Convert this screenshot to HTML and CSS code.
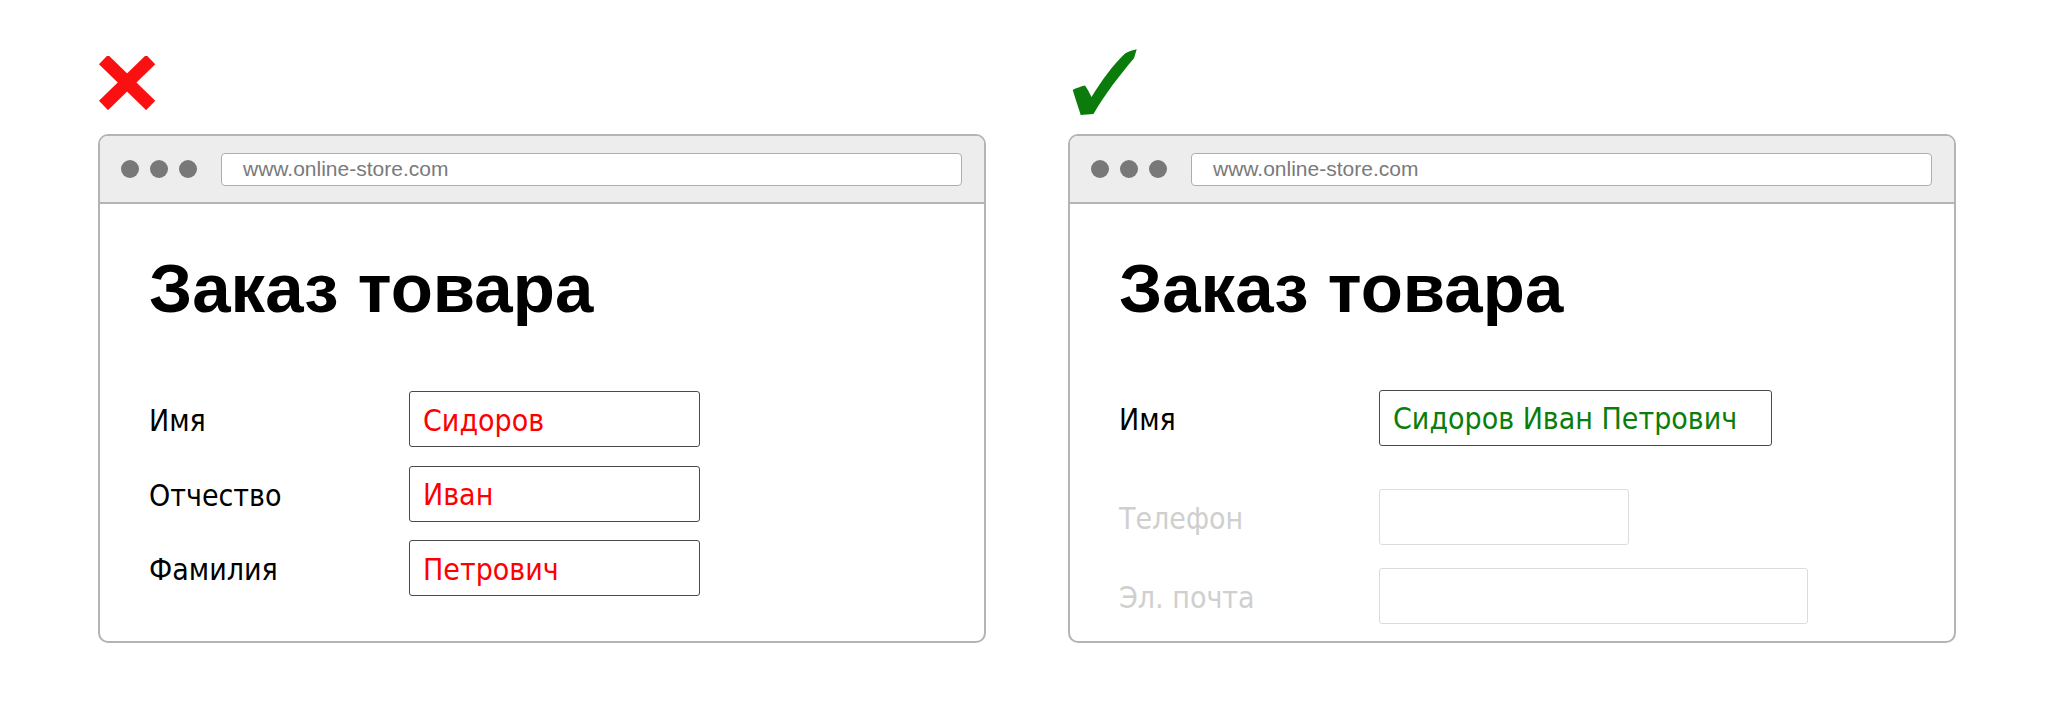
FILE: index.html
```html
<!DOCTYPE html>
<html lang="ru">
<head>
<meta charset="utf-8">
<title>Заказ товара</title>
<link rel="stylesheet" href="styles.css">
</head>
<body>
<div class="panels">
  <section class="panel">
    <div class="mark mark-bad">
      <svg width="58" height="54" viewBox="0 0 58 54" aria-hidden="true">
        <line x1="5.5" y1="3.5" x2="52.7" y2="49.5" stroke="#fa1010" stroke-width="13"/>
        <line x1="52.7" y1="3.5" x2="5.5" y2="49.5" stroke="#fa1010" stroke-width="13"/>
      </svg>
    </div>
    <div class="window">
      <div class="titlebar">
        <span class="dot"></span><span class="dot"></span><span class="dot"></span>
        <div class="url">www.online-store.com</div>
      </div>
      <div class="content">
        <h1 class="title">Заказ товара</h1>
        <div class="form form-bad">
          <div class="label">Имя</div><div class="field field-bad">Сидоров</div>
          <div class="label">Отчество</div><div class="field field-bad">Иван</div>
          <div class="label">Фамилия</div><div class="field field-bad">Петрович</div>
        </div>
      </div>
    </div>
  </section>
  <section class="panel">
    <div class="mark mark-good">
      <svg width="84" height="76" viewBox="0 0 84 76" aria-hidden="true">
        <path d="M12.7 46 C16 44 21 42.5 25 41.5 C27.5 45 29.5 49 31.5 53 C42 36 53 21 65 9.5 C69 7.5 73 6 76.7 5.3 L74 14.3 C60 31 45 50 33.5 70 C29 70.5 25 70.8 20.7 71 C19 65 17 60 12.7 46 Z" fill="#0b7c0b"/>
      </svg>
    </div>
    <div class="window">
      <div class="titlebar">
        <span class="dot"></span><span class="dot"></span><span class="dot"></span>
        <div class="url">www.online-store.com</div>
      </div>
      <div class="content">
        <h1 class="title">Заказ товара</h1>
        <div class="form form-good">
          <div class="label">Имя</div><div class="field field-good field-name">Сидоров Иван Петрович</div>
          <div class="label label-muted row-phone">Телефон</div><div class="field field-empty field-phone row-phone"></div>
          <div class="label label-muted">Эл. почта</div><div class="field field-empty field-email"></div>
        </div>
      </div>
    </div>
  </section>
</div>
</body>
</html>
```
FILE: styles.css
```css
html, body {
  margin: 0;
  padding: 0;
  background: #ffffff;
}
body {
  font-family: "Liberation Sans", Arial, sans-serif;
  color: #000;
}
.panels {
  display: flex;
  gap: 82px;
  padding-left: 98px;
}
.panel {
  display: flex;
  flex-direction: column;
  width: 888px;
}
.mark {
  height: 134px;
}
.mark svg {
  display: block;
}
.mark-bad svg {
  margin-top: 56px;
}
.mark-good svg {
  margin-top: 44px;
  margin-left: -8px;
}
.window {
  box-sizing: border-box;
  width: 888px;
  height: 509px;
  border: 2px solid #b4b4b4;
  border-radius: 10px;
  overflow: hidden;
}
.titlebar {
  height: 66px;
  background: #ededed;
  border-bottom: 2px solid #b4b4b4;
  display: flex;
  align-items: center;
  padding: 0 22px 0 21px;
}
.dot {
  width: 18px;
  height: 18px;
  border-radius: 50%;
  background: #787878;
  margin-right: 11px;
  flex: none;
}
.dot:nth-child(3) {
  margin-right: 24px;
}
.url {
  flex: 1;
  box-sizing: border-box;
  height: 33px;
  background: #fff;
  border: 1.5px solid #aeaeae;
  border-radius: 4px;
  font-size: 21px;
  line-height: 30px;
  color: #7a7a7a;
  padding-left: 21px;
}
.content {
  padding: 45px 0 0 49px;
}
.title {
  margin: 0 0 62px 0;
  font-size: 69px;
  line-height: 80px;
  font-weight: bold;
}
.form {
  display: grid;
  grid-template-columns: 260px auto;
  justify-items: start;
  align-items: center;
  font-family: "DejaVu Sans Condensed", "DejaVu Sans", sans-serif;
  font-stretch: condensed;
  font-size: 30px;
}
.form-bad {
  row-gap: 18.5px;
}
.form-good {
  row-gap: 23px;
  margin-top: -1.5px;
}
.row-phone {
  margin-top: 20px;
}
.label {
  height: 56px;
  box-sizing: border-box;
  padding-top: 3px;
  line-height: 53px;
  white-space: nowrap;
}
.label-muted {
  color: #cfcfcf;
}
.field {
  box-sizing: border-box;
  height: 56px;
  border-radius: 3px;
  border: 1.5px solid #4a4a4a;
  padding: 3.5px 0 0 13px;
  line-height: 49.5px;
  white-space: nowrap;
}
.field-bad {
  width: 291px;
  color: #ff0000;
}
.field-good {
  color: #0a7d0a;
}
.field-name {
  width: 393px;
}
.field-empty {
  border-color: #dcdcdc;
}
.field-phone {
  width: 250px;
}
.field-email {
  width: 429px;
}
```
